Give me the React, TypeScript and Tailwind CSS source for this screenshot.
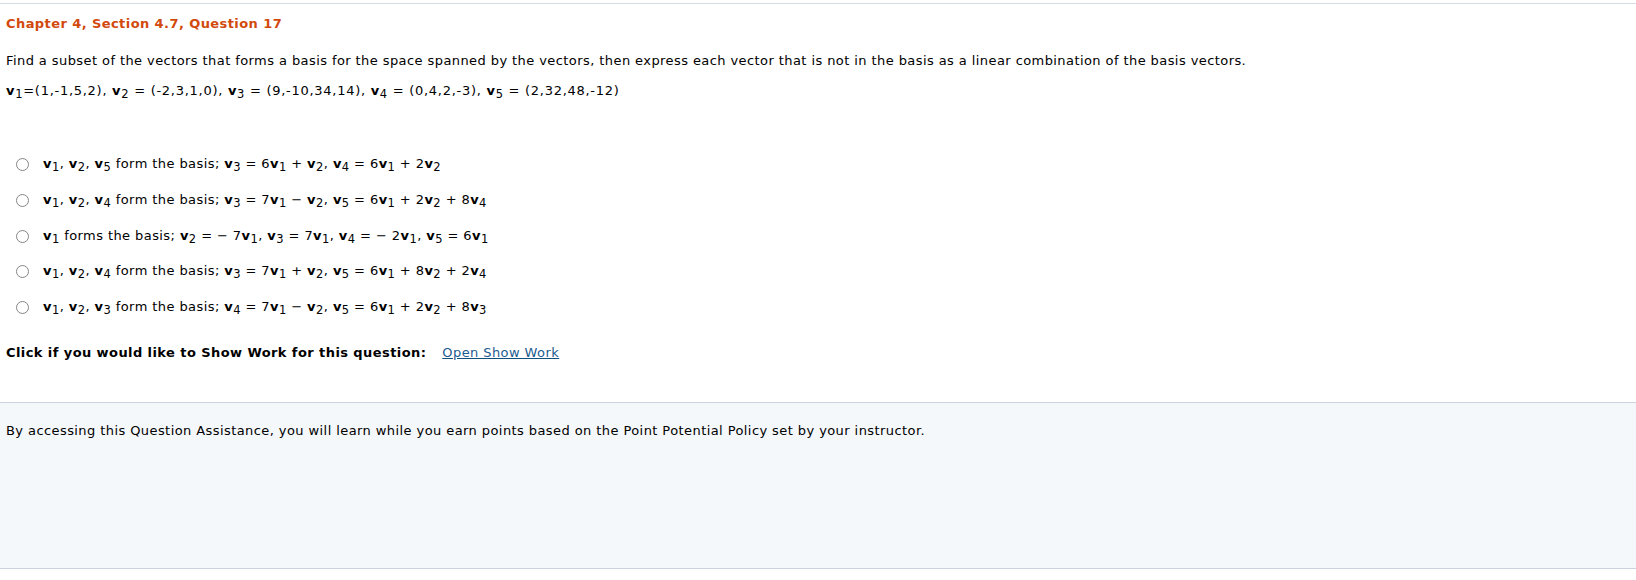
// Question page: chapter heading, prompt, answer choices and assistance panel

function V({ n }: { n: number | string }) {
  return (
    <>
      <b className="font-bold">v</b>
      <sub className="relative top-[3px] bottom-auto align-baseline text-[11.5px] leading-none">{n}</sub>
    </>
  )
}

const options = [
  <>
    <V n={1} />, <V n={2} />, <V n={5} /> form the basis; <V n={3} /> = 6<V n={1} /> + <V n={2} />,{' '}
    <V n={4} /> = 6<V n={1} /> + 2<V n={2} />
  </>,
  <>
    <V n={1} />, <V n={2} />, <V n={4} /> form the basis; <V n={3} /> = 7<V n={1} /> − <V n={2} />,{' '}
    <V n={5} /> = 6<V n={1} /> + 2<V n={2} /> + 8<V n={4} />
  </>,
  <>
    <V n={1} /> forms the basis; <V n={2} /> = − 7<V n={1} />, <V n={3} /> = 7<V n={1} />, <V n={4} /> = − 2
    <V n={1} />, <V n={5} /> = 6<V n={1} />
  </>,
  <>
    <V n={1} />, <V n={2} />, <V n={4} /> form the basis; <V n={3} /> = 7<V n={1} /> + <V n={2} />,{' '}
    <V n={5} /> = 6<V n={1} /> + 8<V n={2} /> + 2<V n={4} />
  </>,
  <>
    <V n={1} />, <V n={2} />, <V n={3} /> form the basis; <V n={4} /> = 7<V n={1} /> − <V n={2} />,{' '}
    <V n={5} /> = 6<V n={1} /> + 2<V n={2} /> + 8<V n={3} />
  </>,
]

export default function App() {
  return (
    <div className="w-full h-[580px] bg-white pt-[3px] font-[Verdana,'DejaVu_Sans',sans-serif] text-[13px] leading-[16px] tracking-[0.42px] text-black">
      <div className="border-t border-[#d5dce5]">
        {/* Question */}
        <div className="px-[6px] pt-[12px]">
          <h2 className="font-bold text-[#d2490d]">Chapter 4, Section 4.7, Question 17</h2>

          <p className="mt-[21px]">
            Find a subset of the vectors that forms a basis for the space spanned by the vectors, then express each
            vector that is not in the basis as a linear combination of the basis vectors.
          </p>

          <p className="mt-[14px] tracking-[0.72px]">
            <V n={1} />=(1,-1,5,2), <V n={2} /> = (-2,3,1,0), <V n={3} /> = (9,-10,34,14), <V n={4} /> =
            (0,4,2,-3), <V n={5} /> = (2,32,48,-12)
          </p>
        </div>

        {/* Choices */}
        <div className="mt-[57px] flex flex-col">
          {options.map((opt, i) => (
            <label key={i} className="h-[35.75px] flex items-start gap-[14px] pl-[16px]">
              <span className="mt-[2px] w-[13px] h-[13px] shrink-0 rounded-full border border-[#858585] bg-white" />
              <span>{opt}</span>
            </label>
          ))}
        </div>

        {/* Show work */}
        <div className="px-[6px] mt-[10px] flex items-center gap-[16px]">
          <span className="font-bold">Click if you would like to Show Work for this question:</span>
          <a className="text-[#1b5c8f] underline decoration-[#0f4f7e]">Open Show Work</a>
        </div>
      </div>

      {/* Assistance panel */}
      <div className="mt-[41px] h-[167px] border-y border-[#ccd3de] bg-[#f5f8fb] px-[6px] pt-[20px]">
        <p>By accessing this Question Assistance, you will learn while you earn points based on the Point Potential Policy set by your instructor.</p>
      </div>
    </div>
  )
}
